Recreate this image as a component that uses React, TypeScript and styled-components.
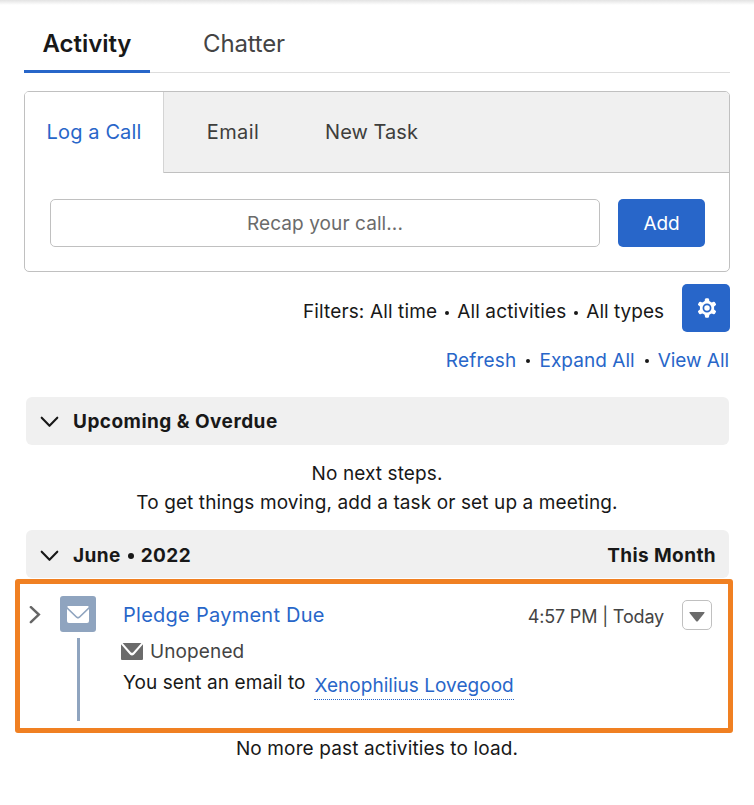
import React from "react";
import styled, { createGlobalStyle } from "styled-components";

const GlobalStyle = createGlobalStyle`
  *, *::before, *::after { box-sizing: border-box; }
  html, body { margin: 0; background: #fff; }
  body {
    font-family: Inter, "Liberation Sans", sans-serif;
    font-size: 19px;
    color: #181818;
  }
  button, input { font: inherit; margin: 0; }
`;

const BLUE = "#2866c9";

const Page = styled.main`
  width: 754px;
  height: 805px;
  overflow: hidden;
  border-top: 4px solid transparent;
  background: linear-gradient(#e3e3e3, #fff) border-box top / 100% 5px no-repeat #fff;
`;

const Text = styled.span<{ $track?: number }>`
  letter-spacing: ${(p) => p.$track ?? 0}px;
  white-space: pre;
`;

const Link = styled.a<{ $track?: number }>`
  color: ${BLUE};
  letter-spacing: ${(p) => p.$track ?? 0}px;
  text-decoration: none;
  white-space: pre;
  cursor: pointer;
`;

const Tabs = styled.nav`
  display: flex;
  height: 69px;
  margin: 0 24px;
  padding-top: 11px;
  border-bottom: 1px solid #dddddd;
`;

const Tab = styled.button<{ $active?: boolean }>`
  height: 58px;
  padding: 3px 0 0;
  width: ${(p) => (p.$active ? 126 : 188)}px;
  border: 0;
  border-bottom: 3px solid ${(p) => (p.$active ? BLUE : "transparent")};
  background: none;
  color: ${(p) => (p.$active ? "#181818" : "#444")};
  font-size: 24px;
  font-weight: ${(p) => (p.$active ? 600 : 400)};
  line-height: 52px;
  letter-spacing: ${(p) => (p.$active ? -0.05 : -0.18)}px;
`;

const Composer = styled.section`
  height: 181px;
  margin: 18px 24px 0;
  border: 1px solid #c0c0c0;
  border-radius: 5px;
  overflow: hidden;
`;

const ActionTabs = styled.div`
  display: flex;
  height: 81px;
  background: #f0f0f0;
  border-bottom: 1px solid #c0c0c0;
`;

const ActionTab = styled.button<{ $active?: boolean; $width: number; $track: number }>`
  width: ${(p) => p.$width}px;
  height: ${(p) => (p.$active ? 81 : 80)}px;
  padding: 0 0 ${(p) => (p.$active ? 2 : 1)}px;
  border: 0;
  border-right: 1px solid ${(p) => (p.$active ? "#d4d4d4" : "transparent")};
  background: ${(p) => (p.$active ? "#fff" : "transparent")};
  color: ${(p) => (p.$active ? BLUE : "#3e3e3c")};
  font-size: 20px;
  letter-spacing: ${(p) => p.$track}px;
`;

const ComposerBody = styled.div`
  display: flex;
  gap: 18px;
  padding: 26px 24px 0 25px;
`;

const RecapInput = styled.input`
  flex: 1;
  min-width: 0;
  height: 48px;
  padding: 0;
  border: 1px solid #c0c0c0;
  border-radius: 5px;
  text-align: center;
  letter-spacing: 0.08px;
  &::placeholder { color: #6b6b6b; opacity: 1; }
`;

const AddButton = styled.button`
  width: 87px;
  height: 48px;
  border: 0;
  border-radius: 5px;
  background: ${BLUE};
  color: #fff;
  letter-spacing: -0.12px;
`;

const FilterRow = styled.div`
  display: flex;
  justify-content: flex-end;
  align-items: center;
  height: 48px;
  margin: 12px 24px 0;
`;

const FilterText = styled.div`
  display: flex;
  align-items: center;
  margin-right: 18px;
  padding-top: 7px;
  line-height: 24px;
`;

const Dot = styled.i<{ $before: number; $after: number; $size?: number }>`
  width: ${(p) => p.$size ?? 4}px;
  height: ${(p) => p.$size ?? 4}px;
  margin: 2px ${(p) => p.$after}px 0 ${(p) => p.$before}px;
  border-radius: 50%;
  background: #181818;
`;

const GearButton = styled.button`
  display: flex;
  align-items: center;
  justify-content: center;
  width: 48px;
  height: 48px;
  padding: 0 0 0 1px;
  border: 0;
  border-radius: 5px;
  background: ${BLUE};
`;

const LinkRow = styled.div`
  display: flex;
  justify-content: flex-end;
  align-items: center;
  height: 24px;
  margin: 16px 25px 0;
`;

const SectionHeader = styled.header<{ $gap: number; $shift?: number }>`
  display: flex;
  align-items: center;
  height: 48px;
  margin: ${(p) => p.$gap}px 25px 0 26px;
  padding: ${(p) => p.$shift ?? 0}px 13px 0 14px;
  border-radius: 6px;
  background: #f0f0f0;
  font-weight: 700;
  svg { margin: 2px 14px 0 0; }
`;

const Spacer = styled.div`
  flex: 1;
`;

const Empty = styled.div`
  margin-top: 14px;
  text-align: center;
  line-height: 29px;
`;

const Highlight = styled.article`
  display: flex;
  width: 718px;
  height: 154px;
  margin: 1px 0 0 15px;
  border: 5px solid #f08022;
  border-radius: 3px;
`;

const Expander = styled.div`
  width: 40px;
  padding: 22px 0 0 9px;
  svg { display: block; }
`;

const Timeline = styled.div`
  display: flex;
  flex-direction: column;
  align-items: center;
  gap: 6px;
  width: 36px;
  padding-top: 12px;
`;

const EmailBadge = styled.div`
  display: flex;
  align-items: center;
  justify-content: center;
  width: 36px;
  height: 36px;
  border-radius: 3px;
  background: #8fa4bf;
`;

const Rail = styled.div`
  width: 3px;
  height: 83px;
  background: #8fa4bf;
`;

const Details = styled.div`
  flex: 1;
  padding-left: 27px;
`;

const Subject = styled.div`
  padding-top: 17px;
  font-size: 20px;
  line-height: 28px;
`;

const Status = styled.div`
  display: flex;
  align-items: center;
  gap: 7px;
  height: 26px;
  margin: 9px 0 0 -2px;
  color: #444;
`;

const Summary = styled.div`
  display: flex;
  gap: 8px;
  margin-top: 7px;
  line-height: 24px;
`;

const Recipient = styled(Link)`
  height: 29px;
  padding: 3px 0 0 1px;
  border-bottom: 1px dotted ${BLUE};
`;

const Meta = styled.div`
  display: flex;
  align-items: flex-start;
  gap: 18px;
  padding: 16px 16px 0 0;
  color: #444;
  font-size: 18px;
  line-height: 34px;
`;

const MenuButton = styled.button`
  display: flex;
  align-items: center;
  justify-content: center;
  width: 30px;
  height: 30px;
  padding: 3px 0 0;
  border: 1px solid #c0c0c0;
  border-radius: 5px;
  background: #fff;
`;

const Footer = styled.footer`
  margin-top: 4px;
  text-align: center;
  line-height: 24px;
`;

const Chevron = () => (
  <svg width="19" height="12" viewBox="0 0 19 12" fill="none" stroke="#181818" strokeWidth="2.1" strokeLinecap="round" strokeLinejoin="round">
    <path d="M1.7 1.7 9.5 9.8l7.8-8.1" />
  </svg>
);

const ChevronRight = () => (
  <svg width="12" height="18" viewBox="0 0 12 18" fill="none" stroke="#666" strokeWidth="2.5" strokeLinecap="round">
    <path d="M1.9 1.2 9.8 8.6 1.9 16.2" />
  </svg>
);

const BadgeEnvelope = () => (
  <svg width="22" height="17" viewBox="0 0 22 17" fill="#fff">
    <path d="M1.2 0h19.6c.8 0 1.2.8.5 1.4L12 10.4c-.6.6-1.4.6-2 0L.7 1.4C0 .8.4 0 1.2 0Z" />
    <path d="M0 2.9 9.1 11.8c1.1 1.1 2.7 1.1 3.8 0L22 2.9V15a2 2 0 0 1-2 2H2a2 2 0 0 1-2-2Z" />
  </svg>
);

const StatusEnvelope = () => (
  <svg width="22" height="17" viewBox="0 0 22 17" fill="#6b6b6b">
    <path d="M1.6 0h18.8L12 9.4c-.6.6-1.4.6-2 0Z" />
    <path d="M0 1.2 9.1 11.7c1.1 1.1 2.7 1.1 3.8 0L22 1.2V16a1 1 0 0 1-1 1H1a1 1 0 0 1-1-1Z" />
  </svg>
);

const Gear = () => (
  <svg width="20" height="20" viewBox="0 0 20 20">
    <g fill="#fff">
      <circle cx="10" cy="10" r="7.2" />
      {[0, 60, 120, 180, 240, 300].map((a) => (
        <path key={a} transform={`rotate(${a} 10 10)`} d="M7.4 4.5 8 1.2Q8.2.3 9 .3h2q.8 0 1 .9l.6 3.3Z" />
      ))}
    </g>
    <circle cx="10" cy="10" r="3.6" fill="#fff" stroke={BLUE} strokeWidth="1.7" />
  </svg>
);

export default function App() {
  return (
    <Page>
      <GlobalStyle />
      <Tabs>
        <Tab $active>Activity</Tab>
        <Tab>Chatter</Tab>
      </Tabs>

      <Composer>
        <ActionTabs>
          <ActionTab $active $width={139} $track={0.12}>Log a Call</ActionTab>
          <ActionTab $width={139} $track={0.4}>Email</ActionTab>
          <ActionTab $width={138} $track={0.05}>New Task</ActionTab>
        </ActionTabs>
        <ComposerBody>
          <RecapInput placeholder="Recap your call..." />
          <AddButton>Add</AddButton>
        </ComposerBody>
      </Composer>

      <FilterRow>
        <FilterText>
          <Text $track={0.13}>Filters: All time</Text>
          <Dot $before={8} $after={8} />
          <Text $track={0.14}>All activities</Text>
          <Dot $before={8} $after={8} />
          <Text>All types</Text>
        </FilterText>
        <GearButton aria-label="Filter settings"><Gear /></GearButton>
      </FilterRow>
      <LinkRow>
        <Link $track={0.2}>Refresh</Link>
        <Dot $before={10} $after={9} />
        <Link $track={0.05}>Expand All</Link>
        <Dot $before={10} $after={9} />
        <Link $track={-0.05}>View All</Link>
      </LinkRow>

      <SectionHeader $gap={25}>
        <Chevron />
        <Text $track={0.47}>Upcoming &amp; Overdue</Text>
      </SectionHeader>
      <Empty>
        <div><Text $track={0.1}>No next steps.</Text></div>
        <div><Text $track={0.11}>To get things moving, add a task or set up a meeting.</Text></div>
      </Empty>

      <SectionHeader $gap={13} $shift={2}>
        <Chevron />
        <Text $track={0.4}>June</Text>
        <Dot $before={7} $after={7} $size={6} />
        <Text $track={0.4}>2022</Text>
        <Spacer />
        <Text $track={0.39}>This Month</Text>
      </SectionHeader>

      <Highlight>
        <Expander><ChevronRight /></Expander>
        <Timeline>
          <EmailBadge><BadgeEnvelope /></EmailBadge>
          <Rail />
        </Timeline>
        <Details>
          <Subject><Link $track={0.26}>Pledge Payment Due</Link></Subject>
          <Status>
            <StatusEnvelope />
            <Text $track={0.12}>Unopened</Text>
          </Status>
          <Summary>
            <Text $track={0.08}>You sent an email to</Text>
            <Recipient $track={0.03}>Xenophilius Lovegood</Recipient>
          </Summary>
        </Details>
        <Meta>
          <Text $track={-0.17}>4:57 PM | Today</Text>
          <MenuButton aria-label="More actions">
            <svg width="16" height="10" viewBox="0 0 16 10" fill="#6b6b6b">
              <path d="M1 0h14q1 .1.4 1L8.8 9.2q-.8.8-1.6 0L.6 1Q0 .1 1 0Z" />
            </svg>
          </MenuButton>
        </Meta>
      </Highlight>

      <Footer><Text $track={0.13}>No more past activities to load.</Text></Footer>
    </Page>
  );
}
